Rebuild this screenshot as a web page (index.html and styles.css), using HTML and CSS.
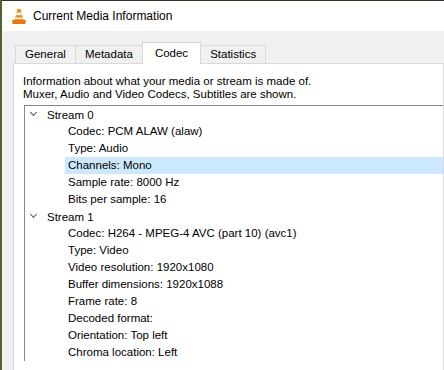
FILE: index.html
```html
<!DOCTYPE html>
<html lang="en">
<head>
    <meta charset="UTF-8">
    <title>Current Media Information</title>
    <link rel="stylesheet" href="styles.css">
</head>

<body>
<div class="window">
    <div class="titlebar">
        <svg class="app-icon" width="16" height="17" viewBox="0 0 16 17">
            <path d="M6.4 1.2 Q8 0.4 9.6 1.2 L12.6 12.5 L3.4 12.5 Z" fill="#f08a12"/>
            <path d="M5.5 4.6 L10.5 4.6 L11.2 7.2 L4.8 7.2 Z" fill="#f4f4f4"/>
            <path d="M4.3 9.4 L11.7 9.4 L12.2 11.2 L3.8 11.2 Z" fill="#f4f4f4"/>
            <path d="M1.2 12.6 Q1.2 11.8 2.2 11.8 L13.8 11.8 Q14.8 11.8 14.8 12.6 L14.6 15.2 Q14.5 16 13.6 16 L2.4 16 Q1.5 16 1.4 15.2 Z" fill="#e8780a"/>
        </svg>
        <span class="title">Current Media Information</span>
    </div>

    <ul class="tabs">
        <li class="tab">General</li>
        <li class="tab">Metadata</li>
        <li class="tab tab-active">Codec</li>
        <li class="tab">Statistics</li>
    </ul>

    <div class="pane">
        <p class="info">Information about what your media or stream is made of.<br>Muxer, Audio and Video Codecs, Subtitles are shown.</p>
        <ul class="tree">
            <li class="node">
                <div class="node-head"><span class="chevron"></span>Stream 0</div>
                <ul class="leaves">
                    <li>Codec: PCM ALAW (alaw)</li>
                    <li>Type: Audio</li>
                    <li class="leaf-selected">Channels: Mono</li>
                    <li>Sample rate: 8000 Hz</li>
                    <li>Bits per sample: 16</li>
                </ul>
            </li>
            <li class="node">
                <div class="node-head"><span class="chevron"></span>Stream 1</div>
                <ul class="leaves">
                    <li>Codec: H264 - MPEG-4 AVC (part 10) (avc1)</li>
                    <li>Type: Video</li>
                    <li>Video resolution: 1920x1080</li>
                    <li>Buffer dimensions: 1920x1088</li>
                    <li>Frame rate: 8</li>
                    <li>Decoded format: </li>
                    <li>Orientation: Top left</li>
                    <li>Chroma location: Left</li>
                </ul>
            </li>
        </ul>
    </div>
</div>
</body>
</html>
```

FILE: styles.css
```css
body,ul,li,p{
    padding: 0;
    margin: 0;
}
ul{
    list-style: none;
}
body{
    background: #4f6232;
    font-family: "Liberation Sans", Arial, sans-serif;
    font-size: 11.5px;
    color: #000;
    overflow: hidden;
    height: 370px;
}
.window{
    box-sizing: border-box;
    margin-left: 2px;
    height: 370px;
    overflow: hidden;
    background: #f0f0f0;
    border-top: 1px solid #2f3524;
}
.titlebar{
    height: 30px;
    background: #fff;
    display: flex;
    align-items: center;
    padding-left: 9px;
}
.app-icon{
    display: block;
}
.title{
    margin-left: 6px;
    margin-top: -1px;
    font-size: 12px;
}
.tabs{
    display: flex;
    align-items: flex-end;
    padding-left: 13px;
    margin-top: 11px;
    height: 21px;
    position: relative;
    z-index: 1;
}
.tab{
    height: 17px;
    line-height: 17px;
    padding: 0 9px;
    border: 1px solid #d9d9d9;
    border-bottom: none;
    margin-left: -1px;
    background: #f0f0f0;
}
.tab:first-child{
    margin-left: 0;
}
.tab-active{
    height: 21px;
    line-height: 21px;
    margin-bottom: -1px;
    background: #fff;
    padding: 0 12px;
}
.pane{
    margin-left: 11px;
    border: 1px solid #d9d9d9;
    background: #fff;
    height: 330px;
    padding: 11px 0 0 9px;
}
.info{
    line-height: 13px;
}
.tree{
    margin: 4px 0 0 1px;
    border-top: 1px solid #828790;
    border-left: 1px solid #828790;
}
.node-head{
    display: flex;
    align-items: center;
    height: 17px;
    padding-left: 22px;
    position: relative;
}
.chevron{
    position: absolute;
    left: 6px;
    top: 4px;
    width: 4px;
    height: 4px;
    border-right: 1.3px solid #555;
    border-bottom: 1.3px solid #555;
    transform: rotate(45deg);
}
.leaves li{
    height: 17px;
    line-height: 17px;
    margin-left: 40px;
    padding-left: 3px;
}
.leaves .leaf-selected{
    background: #cce8ff;
}
```
